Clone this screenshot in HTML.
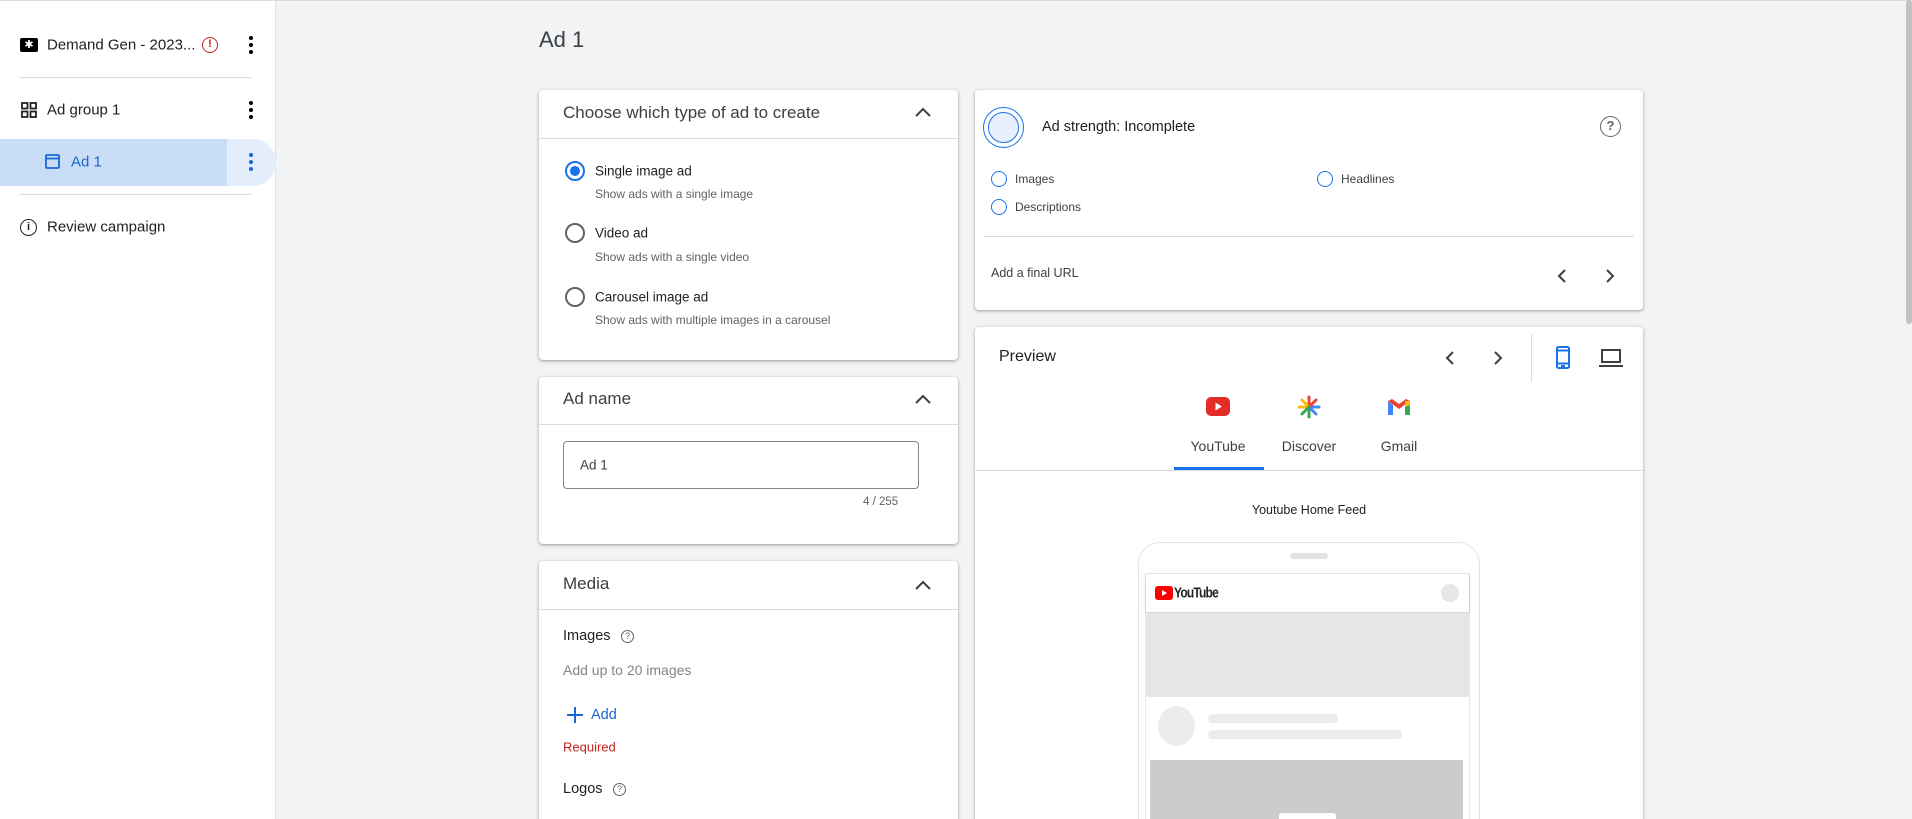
<!DOCTYPE html>
<html><head><meta charset="utf-8"><style>
*{box-sizing:border-box;margin:0;padding:0}
html,body{width:1912px;height:819px;overflow:hidden}
body{background:#f1f3f4;font-family:"Liberation Sans",sans-serif;color:#202124}
#w{position:relative;width:1912px;height:819px;overflow:hidden;background:#f1f3f4}
.a{position:absolute}
.t{position:absolute;white-space:nowrap;transform:translateY(-50%)}
.card{position:absolute;background:#fff;border-radius:4px;box-shadow:0 1px 2px rgba(60,64,67,.3),0 1px 3px 1px rgba(60,64,67,.15)}
.hr{position:absolute;height:1px;background:#dadce0}
.radio{position:absolute;width:20px;height:20px;border-radius:50%;border:2px solid #5f6368}
.sc{position:absolute;width:16px;height:16px;border-radius:50%;border:1.5px solid #1a73e8}
</style></head><body><div id="w">
<div class="a" style="left:0;top:0;width:1912px;height:1px;background:#dadce0"></div>
<!-- sidebar -->
<div class="a" style="left:0;top:1px;width:276px;height:818px;background:#fff;border-right:1px solid #e0e0e0"></div>
<div class="a" style="left:20px;top:38px;width:18px;height:14px;background:#000;border-radius:2px;color:#fff;font-size:11px;text-align:center;line-height:14px">✱</div>
<div class="t" style="left:47px;top:45px;font-size:15px">Demand Gen - 2023...</div>
<div class="a" style="left:202px;top:37px;width:16px;height:16px;border:1.6px solid #c5221f;border-radius:50%;color:#c5221f;font-size:11px;font-weight:bold;text-align:center;line-height:13px">!</div>
<svg class="a" style="left:243px;top:35px" width="16" height="20"><circle cx="8" cy="3" r="2"/><circle cx="8" cy="10" r="2"/><circle cx="8" cy="17" r="2"/></svg>
<div class="hr" style="left:19px;top:77px;width:232px"></div>
<svg class="a" style="left:21px;top:102px" width="16" height="16" fill="none" stroke="#202124" stroke-width="1.8"><rect x="1" y="1" width="5.5" height="5.5"/><rect x="9.5" y="1" width="5.5" height="5.5"/><rect x="1" y="9.5" width="5.5" height="5.5"/><rect x="9.5" y="9.5" width="5.5" height="5.5"/></svg>
<div class="t" style="left:47px;top:110px;font-size:15px">Ad group 1</div>
<svg class="a" style="left:243px;top:100px" width="16" height="20"><circle cx="8" cy="3" r="2"/><circle cx="8" cy="10" r="2"/><circle cx="8" cy="17" r="2"/></svg>
<div class="a" style="left:0;top:139px;width:276px;height:47px;background:#e3edfb;border-radius:0 24px 24px 0"></div>
<div class="a" style="left:0;top:139px;width:227px;height:47px;background:#c9ddf6"></div>
<svg class="a" style="left:45px;top:154px" width="15" height="15" fill="none" stroke="#1967d2" stroke-width="1.8"><rect x="1" y="1" width="13" height="13" rx="1"/><line x1="1" y1="4.5" x2="14" y2="4.5"/></svg>
<div class="t" style="left:71px;top:162px;font-size:15px;color:#1967d2">Ad 1</div>
<svg class="a" style="left:243px;top:152px" width="16" height="20" fill="#1967d2"><circle cx="8" cy="3" r="2"/><circle cx="8" cy="10" r="2"/><circle cx="8" cy="17" r="2"/></svg>
<div class="hr" style="left:19px;top:194px;width:232px"></div>
<div class="a" style="left:20px;top:219px;width:17px;height:17px;border:1.6px solid #202124;border-radius:50%;font-size:11px;font-weight:bold;text-align:center;line-height:14px">i</div>
<div class="t" style="left:47px;top:227px;font-size:15px">Review campaign</div>
<!-- title -->
<div class="t" style="left:539px;top:40px;font-size:22px;color:#3c4043">Ad 1</div>
<!-- card1 -->
<div class="card" style="left:539px;top:90px;width:419px;height:270px"></div>
<div class="t" style="left:563px;top:113px;font-size:17px;color:#3c4043">Choose which type of ad to create</div>
<svg class="a" style="left:914px;top:106px" width="18" height="12" fill="none" stroke="#3c4043" stroke-width="2"><path d="M2 10 L9 3 L16 10"/></svg>
<div class="hr" style="left:539px;top:138px;width:419px"></div>
<div class="radio" style="left:565px;top:161px;border-color:#1a73e8"><div class="a" style="left:3px;top:3px;width:10px;height:10px;border-radius:50%;background:#1a73e8"></div></div>
<div class="t" style="left:595px;top:171px;font-size:13.5px">Single image ad</div>
<div class="t" style="left:595px;top:194px;font-size:12px;color:#5f6368">Show ads with a single image</div>
<div class="radio" style="left:565px;top:223px"></div>
<div class="t" style="left:595px;top:233px;font-size:13.5px">Video ad</div>
<div class="t" style="left:595px;top:257px;font-size:12px;color:#5f6368">Show ads with a single video</div>
<div class="radio" style="left:565px;top:287px"></div>
<div class="t" style="left:595px;top:297px;font-size:13.5px">Carousel image ad</div>
<div class="t" style="left:595px;top:320px;font-size:12px;color:#5f6368">Show ads with multiple images in a carousel</div>
<!-- card2 -->
<div class="card" style="left:539px;top:377px;width:419px;height:167px"></div>
<div class="t" style="left:563px;top:399px;font-size:17px;color:#3c4043">Ad name</div>
<svg class="a" style="left:914px;top:393px" width="18" height="12" fill="none" stroke="#3c4043" stroke-width="2"><path d="M2 10 L9 3 L16 10"/></svg>
<div class="hr" style="left:539px;top:424px;width:419px"></div>
<div class="a" style="left:563px;top:441px;width:356px;height:48px;border:1px solid #80868b;border-radius:4px"></div>
<div class="t" style="left:580px;top:465px;font-size:13.5px;color:#3c4043">Ad 1</div>
<div class="t" style="left:863px;top:502px;font-size:11.5px;color:#5f6368">4 / 255</div>
<!-- card3 -->
<div class="card" style="left:539px;top:561px;width:419px;height:300px"></div>
<div class="t" style="left:563px;top:584px;font-size:17px;color:#3c4043">Media</div>
<svg class="a" style="left:914px;top:579px" width="18" height="12" fill="none" stroke="#3c4043" stroke-width="2"><path d="M2 10 L9 3 L16 10"/></svg>
<div class="hr" style="left:539px;top:609px;width:419px"></div>
<div class="t" style="left:563px;top:636px;font-size:14.5px">Images</div>
<div class="a" style="left:621px;top:630px;width:13px;height:13px;border:1.3px solid #5f6368;border-radius:50%;font-size:9px;color:#5f6368;text-align:center;line-height:11px">?</div>
<div class="t" style="left:563px;top:670px;font-size:14px;color:#80868b">Add up to 20 images</div>
<svg class="a" style="left:566px;top:706px" width="18" height="18" stroke="#1967d2" stroke-width="2"><path d="M9 1V17M1 9H17"/></svg>
<div class="t" style="left:591px;top:715px;font-size:14.5px;color:#1967d2">Add</div>
<div class="t" style="left:563px;top:747px;font-size:13px;color:#c5221f">Required</div>
<div class="t" style="left:563px;top:789px;font-size:14.5px">Logos</div>
<div class="a" style="left:613px;top:783px;width:13px;height:13px;border:1.3px solid #5f6368;border-radius:50%;font-size:9px;color:#5f6368;text-align:center;line-height:11px">?</div>
<div class="t" style="left:563px;top:824px;font-size:14px;color:#80868b">Add up to 5 logos</div>
<!-- strength card -->
<div class="card" style="left:975px;top:90px;width:668px;height:220px"></div>
<div class="a" style="left:983px;top:107px;width:41px;height:41px;border:1.5px solid #1a73e8;border-radius:50%"></div>
<div class="a" style="left:988px;top:112px;width:31px;height:31px;border:1.5px solid #1a73e8;border-radius:50%;background:#e8f0fe"></div>
<div class="t" style="left:1042px;top:127px;font-size:14.5px">Ad strength: Incomplete</div>
<div class="a" style="left:1600px;top:116px;width:21px;height:21px;border:1.8px solid #5f6368;border-radius:50%;font-size:13px;color:#5f6368;text-align:center;line-height:18px;font-weight:bold">?</div>
<div class="sc" style="left:991px;top:171px"></div>
<div class="t" style="left:1015px;top:179px;font-size:12px;color:#3c4043">Images</div>
<div class="sc" style="left:1317px;top:171px"></div>
<div class="t" style="left:1341px;top:179px;font-size:12px;color:#3c4043">Headlines</div>
<div class="sc" style="left:991px;top:199px"></div>
<div class="t" style="left:1015px;top:207px;font-size:12px;color:#3c4043">Descriptions</div>
<div class="hr" style="left:983px;top:236px;width:651px"></div>
<div class="t" style="left:991px;top:273px;font-size:12.5px;color:#3c4043">Add a final URL</div>
<svg class="a" style="left:1556px;top:268px" width="12" height="16" fill="none" stroke="#3c4043" stroke-width="2"><path d="M9 2L3 8L9 14"/></svg>
<svg class="a" style="left:1604px;top:268px" width="12" height="16" fill="none" stroke="#3c4043" stroke-width="2"><path d="M3 2L9 8L3 14"/></svg>
<!-- preview card -->
<div class="card" style="left:975px;top:327px;width:668px;height:540px"></div>
<div class="t" style="left:999px;top:357px;font-size:16px">Preview</div>
<svg class="a" style="left:1444px;top:350px" width="12" height="16" fill="none" stroke="#3c4043" stroke-width="2"><path d="M9 2L3 8L9 14"/></svg>
<svg class="a" style="left:1492px;top:350px" width="12" height="16" fill="none" stroke="#3c4043" stroke-width="2"><path d="M3 2L9 8L3 14"/></svg>
<div class="a" style="left:1531px;top:334px;width:1px;height:48px;background:#dadce0"></div>
<svg class="a" style="left:1555px;top:346px" width="16" height="24" fill="none" stroke="#1a73e8" stroke-width="2"><rect x="2" y="1" width="12" height="21" rx="1.5"/><line x1="2" y1="4.5" x2="14" y2="4.5"/><line x1="2" y1="17.5" x2="14" y2="17.5"/><line x1="6" y1="20" x2="10" y2="20"/></svg>
<svg class="a" style="left:1599px;top:348px" width="24" height="20" fill="none" stroke="#3c4043" stroke-width="2"><rect x="3" y="2" width="18" height="12"/><line x1="0" y1="18" x2="24" y2="18"/></svg>
<svg class="a" style="left:1206px;top:397px" width="24" height="19"><rect x="0" y="0" width="24" height="19" rx="5" fill="#e52d27"/><path d="M9.5 5.5L16 9.5L9.5 13.5Z" fill="#fff"/></svg>
<svg class="a" style="left:1297px;top:395px" width="24" height="24" stroke-width="3" stroke-linecap="round"><path d="M12 2V12" stroke="#ea4335"/><path d="M12 12V22" stroke="#34a853"/><path d="M2 12H12" stroke="#fbbc04"/><path d="M12 12H22" stroke="#4285f4"/><path d="M5 5L12 12" stroke="#fbbc04"/><path d="M12 12L19 19" stroke="#4285f4"/><path d="M19 5L12 12" stroke="#ea4335"/><path d="M12 12L5 19" stroke="#34a853"/></svg>
<svg class="a" style="left:1387px;top:398px" width="24" height="18"><path d="M1 3V17H6V7Z" fill="#4285f4"/><path d="M23 3V17H18V7Z" fill="#34a853"/><path d="M1 3L12 11L23 3L19 1L12 6L5 1Z" fill="#ea4335"/><path d="M18 3L23 3V7L18 9Z" fill="#fbbc04"/></svg>
<div class="t" style="left:1218px;top:446px;font-size:14px;color:#3c4043;transform:translate(-50%,-50%)">YouTube</div>
<div class="t" style="left:1309px;top:446px;font-size:14px;color:#3c4043;transform:translate(-50%,-50%)">Discover</div>
<div class="t" style="left:1399px;top:446px;font-size:14px;color:#3c4043;transform:translate(-50%,-50%)">Gmail</div>
<div class="a" style="left:975px;top:470px;width:668px;height:1px;background:#dadce0"></div>
<div class="a" style="left:1174px;top:467px;width:90px;height:3px;background:#1a73e8"></div>
<div class="t" style="left:1309px;top:510px;font-size:12.5px;transform:translate(-50%,-50%)">Youtube Home Feed</div>
<div class="a" style="left:1138px;top:542px;width:342px;height:320px;border:1px solid #e3e3e3;border-radius:22px;background:#fff"></div>
<div class="a" style="left:1290px;top:553px;width:38px;height:6px;border-radius:3px;background:#e3e3e3"></div>
<div class="a" style="left:1145px;top:573px;width:325px;height:260px;border:1px solid #e8e8e8;border-bottom:none"></div>
<div class="a" style="left:1146px;top:574px;width:323px;height:38px;background:#fff;box-shadow:0 1px 2px rgba(0,0,0,.25)"></div>
<svg class="a" style="left:1155px;top:586px" width="18" height="14"><rect width="18" height="14" rx="3" fill="#ff0000"/><path d="M7 4L12 7L7 10Z" fill="#fff"/></svg>
<div class="t" style="left:1174px;top:593px;font-size:15px;font-weight:bold;letter-spacing:-1px;transform:translateY(-50%) scaleX(.8);transform-origin:left">YouTube</div>
<div class="a" style="left:1441px;top:584px;width:18px;height:18px;border-radius:50%;background:#e6e6e6"></div>
<div class="a" style="left:1146px;top:613px;width:323px;height:84px;background:#e6e6e6"></div>
<div class="a" style="left:1158px;top:706px;width:37px;height:40px;border-radius:50%;background:#ececec"></div>
<div class="a" style="left:1208px;top:714px;width:130px;height:9px;border-radius:4px;background:#ececec"></div>
<div class="a" style="left:1208px;top:730px;width:194px;height:9px;border-radius:4px;background:#ececec"></div>
<div class="a" style="left:1150px;top:760px;width:313px;height:70px;background:#cccccc"></div>
<div class="a" style="left:1279px;top:813px;width:57px;height:12px;border-radius:3px;background:#fff"></div>
<!-- scrollbar -->
<div class="a" style="left:1906px;top:0;width:6px;height:324px;background:#c1c1c1;border-radius:3px"></div>
</div></body></html>
